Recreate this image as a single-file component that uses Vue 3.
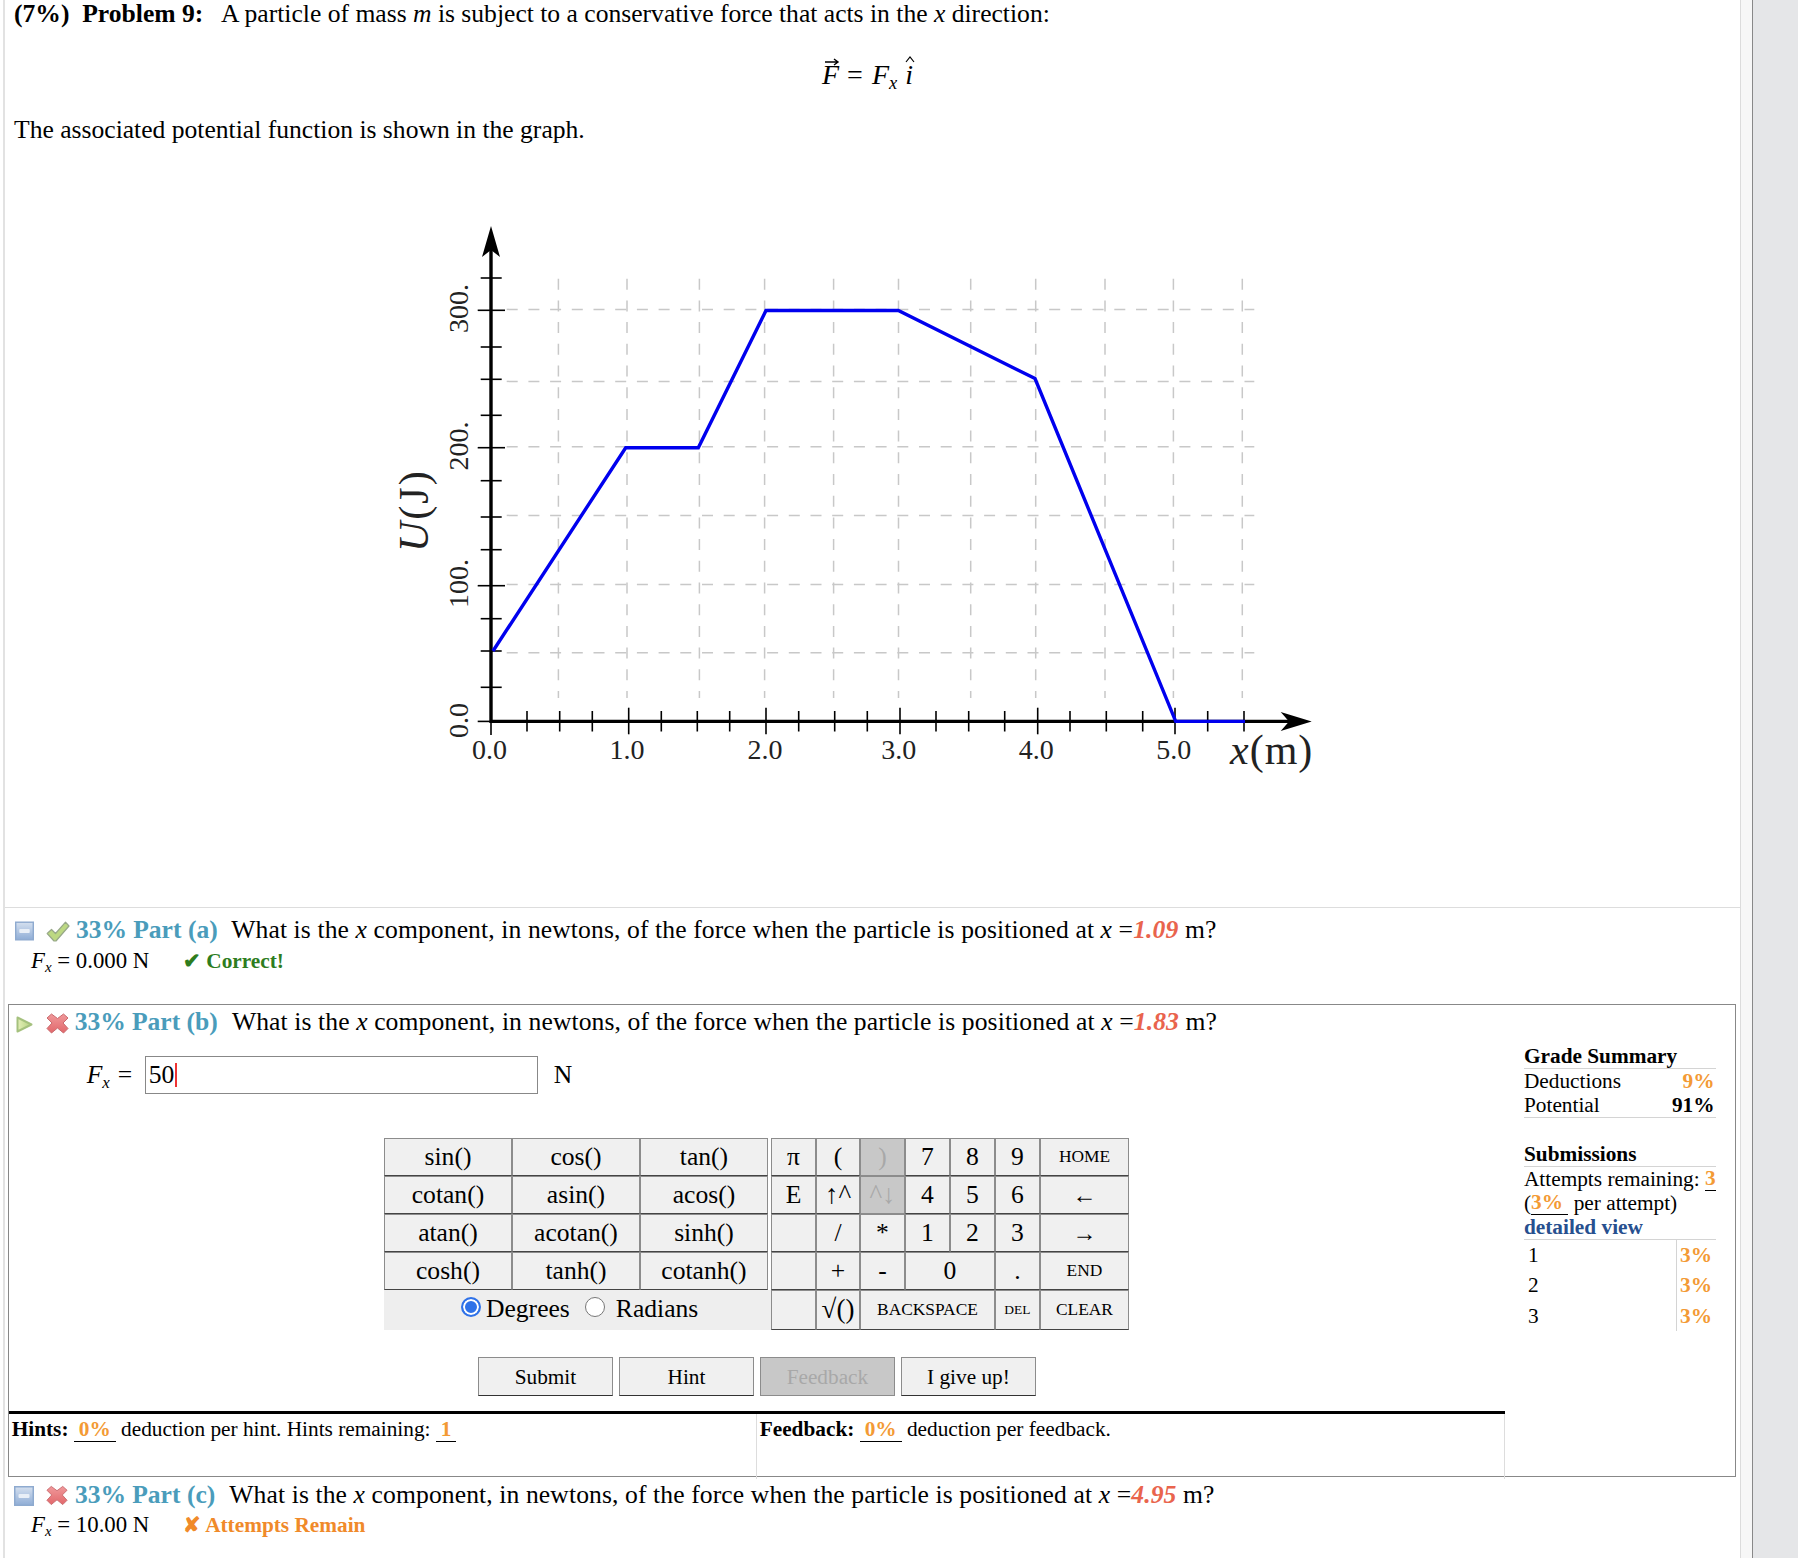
<script setup>
const gridV = [558.4, 627, 699.4, 764.6, 833.6, 898.5, 970.7, 1035.7, 1105, 1173.4, 1242.3]
const gridH = [308.4, 380.4, 445.8, 514.4, 583.4, 651.8]
const yMajor = [309.3, 446.7, 584.7]
const yMinor = [277, 346, 378.3, 414.3, 479.7, 516, 548.7, 617.7, 650, 686.3]
const xMajor = [628.7, 766, 900, 1037.7, 1175]
const xMinor = [527, 559.7, 592.3, 661.3, 697.3, 729.7, 798.7, 834.7, 867.3, 936, 968.7, 1004.7, 1070, 1106.3, 1142.7, 1207.7, 1244]
const xLabels = [
  { t: '0.0', x: 489.4 }, { t: '1.0', x: 627 }, { t: '2.0', x: 765 },
  { t: '3.0', x: 898.7 }, { t: '4.0', x: 1036.3 }, { t: '5.0', x: 1173.7 }
]
const yLabels = [
  { t: '300.', y: 332 }, { t: '200.', y: 469.5 }, { t: '100.', y: 607 }, { t: '0.0', y: 737 }
]
const fnKeys = ['sin()', 'cos()', 'tan()', 'cotan()', 'asin()', 'acos()', 'atan()', 'acotan()', 'sinh()', 'cosh()', 'tanh()', 'cotanh()']
const padKeys = [
  { t: 'π' }, { t: '(' }, { t: ')', off: true }, { t: '7' }, { t: '8' }, { t: '9' }, { t: 'HOME', small: true },
  { t: 'E' }, { t: '↑^', arrow: true }, { t: '^↓', off: true, arrow: true }, { t: '4' }, { t: '5' }, { t: '6' }, { t: '←', wide: true },
  { t: '' }, { t: '/' }, { t: '*' }, { t: '1' }, { t: '2' }, { t: '3' }, { t: '→', wide: true },
  { t: '' }, { t: '+' }, { t: '-' }, { t: '0', span: 2 }, { t: '.' }, { t: 'END', small: true },
  { t: '' }, { t: '√()', root: true }, { t: 'BACKSPACE', span: 3, small: true }, { t: 'DEL', tiny: true }, { t: 'CLEAR', small: true }
]
const tries = ['1', '2', '3']
</script>

<template>
  <div class="page">
    <main class="content">
      <section class="problem">
        <p class="line first">
          <b>(7%)</b>&nbsp;&nbsp;<b>Problem 9:</b>&nbsp;&nbsp; A particle of mass <i>m</i> is subject to a conservative force that acts in the <i>x</i> direction:
        </p>
        <p class="line equation">
          <span class="vec"><i>F</i><svg class="vec-arrow" viewBox="0 0 16 8" aria-hidden="true"><path d="M1 4H14M10 1l4 3-4 3" fill="none" stroke="#000" stroke-width="1.4"/></svg></span>
          <span class="eq-sign">=</span>
          <i>F<sub>x</sub></i>
          <span class="vec hat"><i>i</i><svg class="hat-mark" viewBox="0 0 10 7" aria-hidden="true"><path d="M1 6l4-5 4 5" fill="none" stroke="#000" stroke-width="1.200"/></svg></span>
        </p>
        <p class="line third">The associated potential function is shown in the graph.</p>

        <svg class="plot" viewBox="380 200 960 600" width="960" height="600" role="img" aria-label="U of x graph">
          <g stroke="#c8c8c8" stroke-width="1.5" stroke-dasharray="11 10.7" fill="none">
            <line v-for="x in gridV" :key="x" :x1="x" y1="277.7" :x2="x" y2="697" />
            <line v-for="y in gridH" :key="y" x1="506.7" :y1="y" x2="1254.3" :y2="y" />
          </g>
          <g stroke="#000" stroke-width="1.6">
            <line v-for="y in yMajor" :key="y" x1="477.7" :y1="y" x2="505" :y2="y" />
            <line v-for="y in yMinor" :key="y" x1="480.7" :y1="y" x2="501.7" :y2="y" />
            <line x1="477.7" y1="720.4" x2="491" y2="720.4" />
            <line x1="491" y1="720" x2="491" y2="734" />
            <line v-for="x in xMajor" :key="x" :x1="x" y1="706.7" :x2="x" y2="733.3" />
            <line v-for="x in xMinor" :key="x" :x1="x" y1="710" :x2="x" y2="730.5" />
          </g>
          <g stroke="#000" stroke-width="3.4">
            <line x1="491" y1="722" x2="491" y2="248" />
            <line x1="491" y1="720.4" x2="1290" y2="720.4" />
          </g>
          <polygon points="491,225 482,256 491,249 500,256" fill="#000" />
          <polygon points="1311.7,720.4 1280.7,711 1289,720.4 1280.7,730" fill="#000" />
          <polyline points="493,650 625.7,446.7 698.3,446.7 766,309.5 898.3,309.5 1035,377.6 1175.7,720.4 1245,720.4" fill="none" stroke="#0000ee" stroke-width="3.4" />
          <g class="tick-label">
            <text v-for="l in xLabels" :key="l.t" :x="l.x" y="758" text-anchor="middle">{{ l.t }}</text>
            <text v-for="l in yLabels" :key="l.t" x="468" :y="l.y" :transform="`rotate(-90 468 ${l.y})`">{{ l.t }}</text>
          </g>
          <text class="axis-label xl" x="1230" y="763"><tspan font-style="italic">x</tspan>(m)</text>
          <text class="axis-label yl" x="428" y="551" transform="rotate(-90 428 551)"><tspan font-style="italic">U</tspan>(J)</text>
        </svg>
      </section>

      <section class="part-a">
        <div class="title">
          <svg class="ic ic-min" viewBox="0 0 20 20"><defs>
            <linearGradient id="mg" x1="0" y1="0" x2="0" y2="1"><stop offset="0" stop-color="#d5e0ef"/><stop offset="1" stop-color="#8fadd6"/></linearGradient>
            <linearGradient id="xg" x1="0" y1="0" x2="0" y2="1"><stop offset="0" stop-color="#f0999b"/><stop offset="1" stop-color="#e2686b"/></linearGradient>
            <linearGradient id="tg" x1="0" y1="0" x2="1" y2="0"><stop offset="0" stop-color="#e4efb8"/><stop offset="1" stop-color="#b4d27e"/></linearGradient>
          </defs><rect x=".75" y=".75" width="18.500" height="18.500" fill="url(#mg)" stroke="#8eaacf" stroke-width="1.500"/><rect x="4.500" y="8" width="11" height="4" rx="1" fill="#e9eff7"/></svg>
          <svg class="ic ic-mark" viewBox="0 0 24 21"><path d="M1.200 12.500L5.500 8.500 9.500 12.500 19.500 1.200 23 5 10 20 8 20Z" fill="#bcd882" stroke="#97a888" stroke-width="1.200" stroke-linejoin="round"/></svg>
          <span class="pct">33%</span><span class="part-name">Part (a)</span>
          <span class="q">What is the <i>x</i> component, in newtons, of the force when the particle is positioned at <i>x</i> =<b class="val">1.09</b> m?</span>
        </div>
        <div class="answer">
          <span class="ans-math"><i>F<sub>x</sub></i> = 0.000 N</span>
          <span class="ok">✔ Correct!</span>
        </div>
      </section>

      <section class="part-b">
        <div class="part-main">
          <div class="title title-b">
            <svg class="ic ic-tri" viewBox="0 0 17 17"><path d="M1.500 1.500L15.500 8.500 1.500 15.500Z" fill="url(#tg)" stroke="#a5c17e" stroke-width="2" stroke-linejoin="round"/></svg>
            <svg class="ic ic-x" viewBox="0 0 23 21"><path d="M5.500 1l6 4.500 6-4.500 4.500 4-5 5 5 5.500-4.500 4.500-6-5-6 5-4.500-4.500 5-5.500-5-5Z" fill="url(#xg)" stroke="#c96a6e" stroke-width="1"/></svg>
            <span class="pct">33%</span><span class="part-name">Part (b)</span>
            <span class="q q-b">What is the <i>x</i> component, in newtons, of the force when the particle is positioned at <i>x</i> =<b class="val">1.83</b> m?</span>
          </div>

          <div class="entry">
            <span class="entry-label"><i>F<sub>x</sub></i><span class="entry-eq">=</span></span>
            <div class="entry-box">50<span class="caret"></span></div>
            <span class="entry-unit">N</span>
          </div>

          <div class="keyboard">
            <div class="fn-block">
              <div class="fn-grid">
                <button v-for="k in fnKeys" :key="k" class="key" type="button">{{ k }}</button>
              </div>
              <div class="angle">
                <span class="radio on"></span><span class="ang-a">Degrees</span>
                <span class="radio"></span><span class="ang-b">Radians</span>
              </div>
            </div>
            <div class="pad-grid">
              <button
                v-for="(k, i) in padKeys" :key="i" type="button"
                :class="['key', { off: k.off, small: k.small, tiny: k.tiny, wide: k.wide, arrow: k.arrow, root: k.root, s2: k.span === 2, s3: k.span === 3 }]"
              >{{ k.t }}</button>
            </div>
          </div>

          <div class="actions">
            <button class="act" type="button">Submit</button>
            <button class="act" type="button">Hint</button>
            <button class="act dis" type="button">Feedback</button>
            <button class="act" type="button">I give up!</button>
          </div>

          <div class="hints">
            <div class="hint-col">
              <b>Hints:</b> <span class="und"><b class="org">0%</b></span> deduction per hint. Hints remaining: <span class="und"><b class="org">1</b></span>
            </div>
            <div class="feed-col">
              <b>Feedback:</b> <span class="und"><b class="org">0%</b></span> deduction per feedback.
            </div>
          </div>
        </div>

        <aside class="side">
          <h4 class="side-h">Grade Summary</h4>
          <div class="side-row"><span>Deductions</span><b class="org">9%</b></div>
          <div class="side-row last"><span>Potential</span><b>91%</b></div>
          <h4 class="side-h second">Submissions</h4>
          <div class="side-row">Attempts remaining:&nbsp;<span class="und"><b class="org">3</b></span></div>
          <div class="side-row flat">(<span class="und"><b class="org">3%</b>&nbsp;</span>&nbsp;per attempt)</div>
          <div class="side-row last"><b class="link">detailed view</b></div>
          <div v-for="n in tries" :key="n" class="try">
            <span class="try-n">{{ n }}</span><b class="org try-v">3%</b>
          </div>
        </aside>
      </section>

      <section class="part-c">
        <div class="title">
          <svg class="ic ic-min c" viewBox="0 0 20 20"><rect x=".75" y=".75" width="18.500" height="18.500" fill="url(#mg)" stroke="#8eaacf" stroke-width="1.500"/><rect x="4.500" y="8" width="11" height="4" rx="1" fill="#e9eff7"/></svg>
          <svg class="ic ic-x c" viewBox="0 0 23 21"><path d="M5.500 1l6 4.500 6-4.500 4.500 4-5 5 5 5.500-4.500 4.500-6-5-6 5-4.500-4.500 5-5.500-5-5Z" fill="url(#xg)" stroke="#c96a6e" stroke-width="1"/></svg>
          <span class="pct">33%</span><span class="part-name">Part (c)</span>
          <span class="q q-c">What is the <i>x</i> component, in newtons, of the force when the particle is positioned at <i>x</i> =<b class="val">4.95</b> m?</span>
        </div>
        <div class="answer answer-c">
          <span class="ans-math"><i>F<sub>x</sub></i> = 10.00 N</span>
          <span class="bad">✘ Attempts Remain</span>
        </div>
      </section>
    </main>
    <div class="gutter"></div>
    <div class="rail"></div>
  </div>
</template>

<style scoped>
.page {
  display: flex;
  width: 1798px;
  height: 1558px;
  overflow: hidden;
  background: #fff;
  font-family: "Liberation Serif", "Times New Roman", serif;
  color: #000;
}
.content {
  box-sizing: border-box;
  flex: none;
  width: 1738px;
  margin-left: 3px;
  border-left: 2px solid #e2e2e2;
  border-right: 1px solid #dcdcdc;
}
.gutter {
  flex: none;
  width: 11px;
  background: #f7f7f7;
  border-right: 1px solid #888;
}
.rail { flex: 1; background: #e5e6e8; }

.problem {
  height: 908px;
  padding-top: .5px;
  box-sizing: border-box;
  border-bottom: 1px solid #ddd;
  overflow: hidden;
}
.line {
  margin: 0;
  font-size: 25.600px;
  line-height: 26px;
  white-space: nowrap;
  padding-left: 9px;
}
.equation {
  margin-top: 35px;
  padding-left: 817px;
  font-size: 28px;
}
.eq-sign { margin: 0 9px 0 8px; }
.third { margin-top: 29px; }
.vec { position: relative; display: inline-block; }
.vec-arrow { position: absolute; left: 2px; top: -4px; width: 16px; height: 8px; }
.hat { margin-left: 8px; }
.hat-mark { position: absolute; left: 0; top: -6px; width: 10px; height: 7px; }
sub { font-size: 66%; line-height: 0; vertical-align: -.28em; }
.plot { display: block; margin: 58px 0 0 375px; }
.tick-label text { font-size: 28px; fill: #222; font-family: "Liberation Serif", serif; }
.axis-label { fill: #222; font-family: "Liberation Serif", serif; }
.xl { font-size: 42px; letter-spacing: 1px; }
.yl { font-size: 42px; letter-spacing: 2px; }

.title {
  display: flex;
  align-items: baseline;
  font-size: 25.600px;
  line-height: 26px;
  white-space: nowrap;
  padding-left: 10px;
  height: 26px;
}
.ic { flex: none; align-self: flex-start; }
.ic-min { width: 19px; height: 20px; margin-top: 3.400px; }
.ic-mark { width: 24px; height: 21px; margin: 4px 6px 0 12px; }
.ic-tri { width: 17px; height: 17px; margin: 7px 13px 0 7px; }
.ic-x { width: 23px; height: 21px; margin: 3.700px 6px 0 0; }
.ic-min.c { width: 20px; margin-top: 4.600px; margin-left: -1px; }
.ic-x.c { width: 22px; margin: 3.300px 7px 0 12px; }
.pct, .part-name { font-weight: 700; color: #4a9cbb; }
.part-name { margin-left: 6px; }
.q { margin-left: 13.500px; letter-spacing: .11px; }
.q-b, .q-c { margin-left: 14px; }
.val { color: #e9644d; font-style: italic; }

.part-a { padding-top: 9.300px; }
.answer {
  display: flex;
  align-items: baseline;
  margin-top: 6px;
  padding-left: 26px;
  height: 24px;
  line-height: 24px;
  white-space: nowrap;
}
.answer-c { margin-top: 5px; }
.ans-math { font-size: 22.800px; width: 152px; flex: none; }
.ok { font-size: 21.300px; font-weight: 700; color: #2e7d1e; }
.bad { font-size: 21.300px; font-weight: 700; color: #f08a2a; }

.part-b {
  box-sizing: border-box;
  display: flex;
  width: 1728px;
  height: 473.350px;
  margin: 30.500px 0 0 2.700px;
  border: 1px solid #888;
}
.part-main { width: 1496px; flex: none; }
.title-b { padding-left: 0; margin-top: 4.150px; }
.entry {
  display: flex;
  align-items: center;
  height: 37.500px;
  margin-top: 21.200px;
  padding-left: 78px;
  font-size: 25.600px;
}
.entry-label { width: 58px; flex: none; white-space: nowrap; }
.entry-eq { margin-left: 8px; }
.entry-box {
  box-sizing: border-box;
  display: flex;
  align-items: center;
  width: 393px;
  height: 37.500px;
  padding-left: 3px;
  border: 1px solid #888;
}
.caret { width: 1.500px; height: 24px; background: #e33; margin-left: 1px; }
.entry-unit { margin-left: 16px; }

.keyboard {
  display: flex;
  gap: 3px;
  margin: 44px 0 0 375.300px;
  width: 745px;
}
.fn-block { width: 384px; flex: none; }
.fn-grid {
  display: grid;
  grid-template-columns: 128px 128px 128px;
  grid-auto-rows: 38px;
}
.pad-grid {
  display: grid;
  grid-template-columns: 45px 44px 45px 45px 45px 45px 89px;
  grid-template-rows: 38px 38px 38px 38px 40px;
}
.key {
  box-sizing: border-box;
  padding: 0;
  margin: 0;
  font: 400 25.600px/1 "Liberation Serif", serif;
  color: #000;
  background: #f0f0f0;
  border: 1px solid #8c8c8c;
  border-bottom: 1.500px solid #444;
  border-radius: 0;
  white-space: nowrap;
  overflow: hidden;
}
.key.small { font-size: 17.400px; }
.key.tiny { font-size: 13.500px; }
.key.wide { font-size: 24px; }
.key.arrow { font-size: 27px; }
.key.root { font-size: 27px; }
.key.off { background: #c8c8c8; color: #a8a8a8; border-bottom-color: #8c8c8c; }
.s2 { grid-column: span 2; }
.s3 { grid-column: span 3; }
.angle {
  display: flex;
  align-items: center;
  height: 40px;
  background: #eee;
  margin-right: -3px;
  padding: 0 0 2px 77px;
  box-sizing: border-box;
  font-size: 25.600px;
  line-height: 38px;
}
.radio {
  box-sizing: border-box;
  width: 20px;
  height: 20px;
  flex: none;
  border-radius: 50%;
  border: 1.500px solid #777;
  background: #fff;
  margin-left: 15px;
  margin-top: -4px;
}
.radio.on {
  margin-left: 0;
  border: 2px solid #2f72e8;
  background: #2f72e8;
  box-shadow: inset 0 0 0 2px #fff;
}
.ang-a { margin-left: 5px; }
.ang-b { margin-left: 11px; }

.actions {
  display: flex;
  gap: 6.500px;
  margin: 27.500px 0 0 469.500px;
}
.act {
  box-sizing: border-box;
  width: 134.500px;
  height: 38.500px;
  padding: 3px 0 0;
  font: 400 21.300px/1 "Liberation Serif", serif;
  color: #000;
  background: #f0f0f0;
  border: 1px solid #8c8c8c;
  border-bottom: 1.500px solid #333;
  border-radius: 0;
}
.act.dis { background: #c8c8c8; color: #a8a8a8; border-bottom-color: #8c8c8c; }

.hints {
  display: flex;
  margin-top: 15.500px;
  height: 65px;
  border-top: 3px solid #000;
  font-size: 21.300px;
  line-height: 24px;
  white-space: nowrap;
}
.hint-col { width: 748px; padding: 3px 0 0 3px; flex: none; box-sizing: border-box; border-right: 1px solid #ddd; }
.feed-col { flex: 1; padding: 3px 0 0 3px; border-right: 1px solid #ddd; }
.org { color: #f39a34; }
.und { display: inline-block; padding: 0 5px; border-bottom: 1px solid #000; line-height: 23px; }

.side { width: 192px; margin-left: 19.300px; font-size: 21.300px; line-height: 24px; white-space: nowrap; }
.side-h { margin: 39px 0 0; font-size: 21.300px; line-height: 24px; font-weight: 700; border-bottom: 1px solid #d4d4d4; }
.side-h.second { margin-top: 24px; }
.side-row { display: flex; justify-content: space-between; height: 24px; padding-right: 1.500px; }
.side-row.flat { justify-content: flex-start; }
.side-row.last { border-bottom: 1px solid #d4d4d4; }
.side .und { padding: 0; height: 23px; }
.link { color: #27508f; }
.try { display: flex; height: 30.500px; line-height: 30px; }
.try-n { width: 153px; flex: none; padding-left: 4px; box-sizing: border-box; border-right: 1px solid #d4d4d4; }
.try-v { margin-left: 3px; }

.part-c { padding-top: 4.550px; }
</style>
